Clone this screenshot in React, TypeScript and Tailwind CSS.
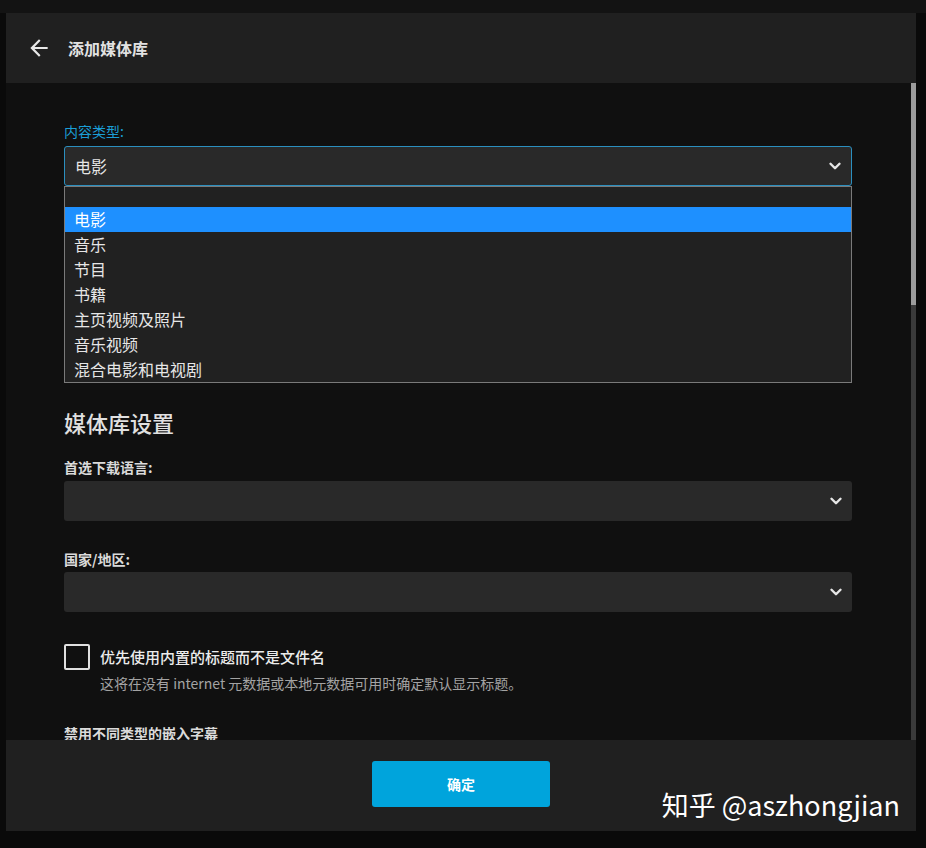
import { ChevronDown } from 'lucide-react';

const contentTypes = ['电影', '音乐', '节目', '书籍', '主页视频及照片', '音乐视频', '混合电影和电视剧'];

const font = { fontFamily: '"Noto Sans CJK SC", "Noto Sans", sans-serif' };

function SelectBox({ value, active }: { value?: string; active?: boolean }) {
  return (
    <div
      className={`flex h-10 w-full items-center justify-between rounded-[3px] bg-[#292929] pl-[10px] pr-[7px] text-base text-[#e6e6e6] ${
        active ? 'border border-[#2b8fbf]' : ''
      }`}
    >
      <span>{value}</span>
      <ChevronDown className="h-[18px] w-[18px] text-[#e6e6e6]" strokeWidth={3.2} />
    </div>
  );
}

export default function App() {
  return (
    <div className="min-h-[848px] w-[926px] bg-[#0a0a0a]" style={font}>
      <div className="h-[13px] bg-[#131313]" />
      <div className="flex">
        <div className="w-[6px] shrink-0" />
        <div className="flex w-[910px] flex-col">
          {/* header */}
          <div className="flex h-[70px] items-center bg-[#202020] pl-[20px]">
            <svg viewBox="0 0 24 24" className="h-[26px] w-[26px] fill-[#e8e8e8]">
              <path d="M20 11H7.83l5.59-5.59L12 4l-8 8 8 8 1.41-1.41L7.83 13H20v-2z" />
            </svg>
            <h1 className="ml-4 text-base font-bold text-[#e2e2e2]">添加媒体库</h1>
          </div>

          {/* scrolling body */}
          <div className="flex h-[657px] bg-[#101010]">
            <div className="flex-1 overflow-hidden pl-[58px] pr-[59px] pt-[38px]">
              <label className="block text-sm leading-5 text-[#1b9ed6]">内容类型:</label>
              <div className="relative mt-[5px]">
                <SelectBox value="电影" active />
                <div className="absolute left-0 right-0 top-full z-10 border border-[#7a7a7a] bg-[#212121] text-base">
                  <div className="h-5" />
                  {contentTypes.map((t, i) => (
                    <div
                      key={t}
                      className={`h-[25px] pl-[9px] leading-[25px] ${
                        i === 0 ? 'bg-[#1e90ff] text-white' : 'text-[#e6e6e6]'
                      }`}
                    >
                      {t}
                    </div>
                  ))}
                </div>
              </div>

              {/* room taken by the name field under the open list */}
              <div className="h-[221px]" />

              <h2 className="text-[22px] font-medium leading-[30px] text-[#e0e0e0]">媒体库设置</h2>

              <label className="mt-5 block text-sm font-bold leading-5 text-[#dadada]">首选下载语言:</label>
              <div className="mt-1">
                <SelectBox />
              </div>

              <label className="mt-7 block text-sm font-bold leading-5 text-[#dadada]">国家/地区:</label>
              <div className="mt-[3px]">
                <SelectBox />
              </div>

              <div className="mt-8 flex items-start">
                <div className="h-[26px] w-[26px] shrink-0 rounded-[2px] border-2 border-[#e0e0e0]" />
                <div className="ml-[10px]">
                  <div className="text-[15px] font-medium leading-[26px] text-[#ececec]">
                    优先使用内置的标题而不是文件名
                  </div>
                  <div className="mt-[3px] text-sm leading-5 text-[#a3a3a3]">
                    这将在没有 internet 元数据或本地元数据可用时确定默认显示标题。
                  </div>
                </div>
              </div>

              <div className="mt-[30px] text-sm font-bold leading-5 text-[#dadada]">禁用不同类型的嵌入字幕</div>
            </div>
            {/* scrollbar */}
            <div className="flex w-[5px] shrink-0 flex-col bg-[#3a3a3a]">
              <div className="h-[222px] bg-[#9c9c9c]" />
            </div>
          </div>

          {/* footer */}
          <div className="relative flex h-[91px] items-start justify-center bg-[#202020] pt-[21px]">
            <button className="h-[46px] w-[178px] rounded-[3px] bg-[#00a4dc] text-sm font-bold text-white">
              确定
            </button>
            <div className="absolute bottom-[13px] right-[16px] text-[27px] leading-none text-white">
              知乎 @aszhongjian
            </div>
          </div>
        </div>
      </div>
    </div>
  );
}
